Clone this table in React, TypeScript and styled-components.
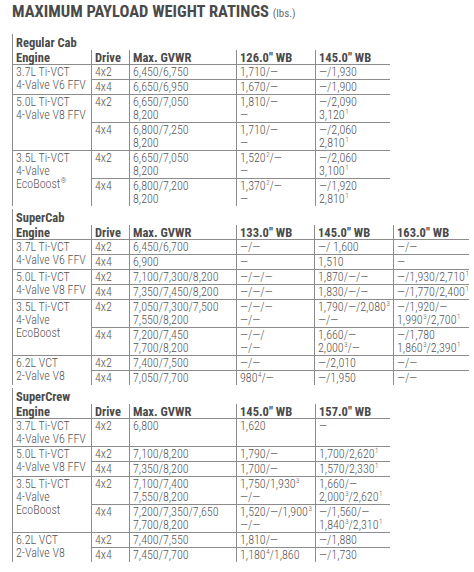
import React from 'react';
import styled, { createGlobalStyle } from 'styled-components';

const GlobalStyle = createGlobalStyle`
  html, body {
    margin: 0;
    padding: 0;
    background: #ffffff;
  }
  body {
    font-family: "Roboto Condensed", "Liberation Sans Narrow", "Liberation Sans", sans-serif;
    color: #606060;
  }
`;

interface Row {
  drive: string;
  gvwr: string[];
  vals: string[][];
}
interface Group {
  engine: string[];
  rows: Row[];
}
interface Section {
  name: string;
  wb: string[];
  widths: number[];
  groups: Group[];
}

const base = [79, 38, 107];

const sections: Section[] = [
  {
    name: 'Regular Cab',
    wb: ['126.0" WB', '145.0" WB'],
    widths: [...base, 79, 74],
    groups: [
      {
        engine: ['3.7L Ti-VCT', '4-Valve V6 FFV'],
        rows: [
          { drive: '4x2', gvwr: ['6,450/6,750'], vals: [['1,710/—'], ['—/1,930']] },
          { drive: '4x4', gvwr: ['6,650/6,950'], vals: [['1,670/—'], ['—/1,900']] },
        ],
      },
      {
        engine: ['5.0L Ti-VCT', '4-Valve V8 FFV'],
        rows: [
          { drive: '4x2', gvwr: ['6,650/7,050', '8,200'], vals: [['1,810/—', '—'], ['—/2,090', '3,120^1']] },
          { drive: '4x4', gvwr: ['6,800/7,250', '8,200'], vals: [['1,710/—', '—'], ['—/2,060', '2,810^1']] },
        ],
      },
      {
        engine: ['3.5L Ti-VCT', '4-Valve', 'EcoBoost^®'],
        rows: [
          { drive: '4x2', gvwr: ['6,650/7,050', '8,200'], vals: [['1,520^2/—', '—'], ['—/2,060', '3,100^1']] },
          { drive: '4x4', gvwr: ['6,800/7,200', '8,200'], vals: [['1,370^2/—', '—'], ['—/1,920', '2,810^1']] },
        ],
      },
    ],
  },
  {
    name: 'SuperCab',
    wb: ['133.0" WB', '145.0" WB', '163.0" WB'],
    widths: [...base, 78, 79, 75],
    groups: [
      {
        engine: ['3.7L Ti-VCT', '4-Valve V6 FFV'],
        rows: [
          { drive: '4x2', gvwr: ['6,450/6,700'], vals: [['—/—'], ['—/ 1,600'], ['—/—']] },
          { drive: '4x4', gvwr: ['6,900'], vals: [['—'], ['1,510'], ['—']] },
        ],
      },
      {
        engine: ['5.0L Ti-VCT', '4-Valve V8 FFV'],
        rows: [
          { drive: '4x2', gvwr: ['7,100/7,300/8,200'], vals: [['—/—/—'], ['1,870/—/—'], ['—/1,930/2,710^1']] },
          { drive: '4x4', gvwr: ['7,350/7,450/8,200'], vals: [['—/—/—'], ['1,830/—/—'], ['—/1,770/2,400^1']] },
        ],
      },
      {
        engine: ['3.5L Ti-VCT', '4-Valve', 'EcoBoost'],
        rows: [
          {
            drive: '4x2',
            gvwr: ['7,050/7,300/7,500', '7,550/8,200'],
            vals: [['—/—/—', '—/—'], ['1,790/—/2,080^3', '—/—'], ['—/1,920/—', '1,990^3/2,700^1']],
          },
          {
            drive: '4x4',
            gvwr: ['7,200/7,450', '7,700/8,200'],
            vals: [['—/—/', '—/—'], ['1,660/—', '2,000^3/—'], ['—/1,780', '1,860^3/2,390^1']],
          },
        ],
      },
      {
        engine: ['6.2L VCT', '2-Valve V8'],
        rows: [
          { drive: '4x2', gvwr: ['7,400/7,500'], vals: [['—/—'], ['—/2,010'], ['—/—']] },
          { drive: '4x4', gvwr: ['7,050/7,700'], vals: [['980^4/—'], ['—/1,950'], ['—/—']] },
        ],
      },
    ],
  },
  {
    name: 'SuperCrew',
    wb: ['145.0" WB', '157.0" WB'],
    widths: [...base, 79, 74],
    groups: [
      {
        engine: ['3.7L Ti-VCT', '4-Valve V6 FFV'],
        rows: [{ drive: '4x2', gvwr: ['6,800'], vals: [['1,620'], ['—']] }],
      },
      {
        engine: ['5.0L Ti-VCT', '4-Valve V8 FFV'],
        rows: [
          { drive: '4x2', gvwr: ['7,100/8,200'], vals: [['1,790/—'], ['1,700/2,620^1']] },
          { drive: '4x4', gvwr: ['7,350/8,200'], vals: [['1,700/—'], ['1,570/2,330^1']] },
        ],
      },
      {
        engine: ['3.5L Ti-VCT', '4-Valve', 'EcoBoost'],
        rows: [
          {
            drive: '4x2',
            gvwr: ['7,100/7,400', '7,550/8,200'],
            vals: [['1,750/1,930^3', '—/—'], ['1,660/—', '2,000^3/2,620^1']],
          },
          {
            drive: '4x4',
            gvwr: ['7,200/7,350/7,650', '7,700/8,200'],
            vals: [['1,520/—/1,900^3', '—/—'], ['—/1,560/—', '1,840^3/2,310^1']],
          },
        ],
      },
      {
        engine: ['6.2L VCT', '2-Valve V8'],
        rows: [
          { drive: '4x2', gvwr: ['7,400/7,550'], vals: [['1,810/—'], ['—/1,880']] },
          { drive: '4x4', gvwr: ['7,450/7,700'], vals: [['1,180^4/1,860'], ['—/1,730']] },
        ],
      },
    ],
  },
];

// "1,520^2/—" -> 1,520<sup>2</sup>/—
const Marked = ({ text }: { text: string }) => {
  const parts = text.split(/\^(\S)/);
  return (
    <>
      {parts.map((p, i) => (i % 2 === 1 ? <Sup key={i}>{p}</Sup> : <React.Fragment key={i}>{p}</React.Fragment>))}
    </>
  );
};

const Lines = ({ lines }: { lines: string[] }) => (
  <>
    {lines.map((l) => (
      <Line key={l}>
        <Marked text={l} />
      </Line>
    ))}
  </>
);

const RatingTable = ({ section }: { section: Section }) => {
  const cols = section.widths.length;
  const total = section.widths.reduce((a, b) => a + b, 0);
  return (
    <Table $w={total}>
      <colgroup>
        {section.widths.map((w, i) => (
          <Col key={i} $w={w} />
        ))}
      </colgroup>
      <tbody>
        <tr>
          <LabelCell colSpan={cols}>{section.name}</LabelCell>
        </tr>
        <tr>
          <Th>Engine</Th>
          <Th>Drive</Th>
          <Th>Max. GVWR</Th>
          {section.wb.map((w) => (
            <Th key={w}>{w}</Th>
          ))}
        </tr>
        {section.groups.map((g, gi) => {
          const lastGroup = gi === section.groups.length - 1;
          return g.rows.map((r, ri) => {
            const last = lastGroup && ri === g.rows.length - 1;
            return (
              <tr key={`${gi}-${ri}`}>
                {ri === 0 && (
                  <Td rowSpan={g.rows.length} $last={lastGroup}>
                    <Lines lines={g.engine} />
                  </Td>
                )}
                <Td $last={last}>{r.drive}</Td>
                <Td $last={last}>
                  <Lines lines={r.gvwr} />
                </Td>
                {r.vals.map((v, vi) => (
                  <Td key={vi} $last={last}>
                    <Lines lines={v} />
                  </Td>
                ))}
              </tr>
            );
          });
        })}
      </tbody>
    </Table>
  );
};

export default function App() {
  return (
    <Page>
      <GlobalStyle />
      <Title>
        MAXIMUM PAYLOAD WEIGHT RATINGS <Unit>(lbs.)</Unit>
      </Title>
      <Tables>
        {sections.map((s) => (
          <RatingTable key={s.name} section={s} />
        ))}
      </Tables>
    </Page>
  );
}

const Page = styled.div`
  padding: 3px 0 0 12px;
`;

const Title = styled.h1`
  margin: 0;
  font-size: 16.5px;
  line-height: 18px;
  font-weight: 700;
  color: #4a4a4a;
`;

const Unit = styled.span`
  font-size: 11px;
  font-weight: 400;
  color: #6a6a6a;
`;

const Tables = styled.div`
  display: flex;
  flex-direction: column;
  gap: 3px;
  margin-top: 11px;
`;

const Table = styled.table<{ $w: number }>`
  width: ${(p) => p.$w}px;
  table-layout: fixed;
  border-collapse: collapse;
`;

const Col = styled.col<{ $w: number }>`
  width: ${(p) => p.$w}px;
`;

const cellBase = `
  border-left: 1px solid #8c8c8c;
  padding: 1px 3px 0 3px;
  text-align: left;
  vertical-align: top;
  white-space: nowrap;
`;

const LabelCell = styled.td`
  ${cellBase}
  font-size: 12.5px;
  line-height: 15px;
  font-weight: 700;
  color: #4a4a4a;
`;

const Th = styled.th`
  ${cellBase}
  border-bottom: 1px solid #8c8c8c;
  font-size: 12.5px;
  line-height: 13px;
  font-weight: 700;
  color: #4a4a4a;
`;

const Td = styled.td<{ $last?: boolean }>`
  ${cellBase}
  border-bottom: ${(p) => (p.$last ? 'none' : '1px solid #8c8c8c')};
  font-size: 12px;
  line-height: 13px;
  font-weight: 300;
  color: #555555;
`;

const Line = styled.span`
  display: block;
`;

const Sup = styled.sup`
  font-size: 7px;
  line-height: 0;
  vertical-align: 5px;
  margin-left: 0.5px;
`;
